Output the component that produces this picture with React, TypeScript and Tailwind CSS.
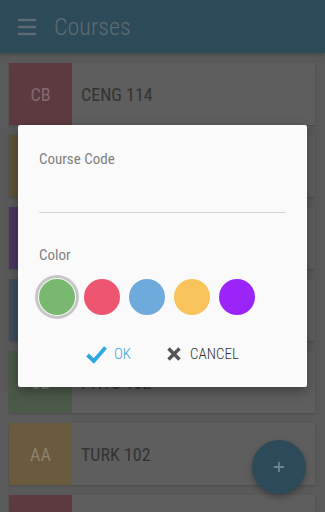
import { Menu } from 'lucide-react'

type Course = {
  code: string
  initials: string
  color: string
}

// rows 2-4 sit fully under the dialog, row 7 below the fold
const courses: Course[] = [
  { code: 'CENG 114', initials: 'CB', color: 'bg-[#5d3a40]' },
  { code: '', initials: '', color: 'bg-[#5f5238]' },
  { code: '', initials: '', color: 'bg-[#4a3660]' },
  { code: '', initials: '', color: 'bg-[#3e4c5b]' },
  { code: 'PHYS 102', initials: 'CB', color: 'bg-[#4b5a48]' },
  { code: 'TURK 102', initials: 'AA', color: 'bg-[#6a5a3e]' },
  { code: '', initials: '', color: 'bg-[#5d3a40]' },
]

const swatches = ['bg-[#78b96f]', 'bg-[#ee5571]', 'bg-[#6eaadc]', 'bg-[#f8c35a]', 'bg-[#9b25f8]']

const condensed = "font-['Roboto_Condensed','Liberation_Sans_Narrow','Roboto',sans-serif]"

function cn(...parts: string[]) {
  return parts.filter(Boolean).join(' ')
}

function CourseRow({ course }: { course: Course }) {
  return (
    <div className="flex h-[62px] items-center bg-[#5e5e5e] shadow-[0_1px_2px_rgba(0,0,0,0.15)]">
      <div className={cn('flex h-full w-[63px] items-center justify-center', course.color)}>
        {course.initials ? (
          <span className={`${condensed} text-[18px] text-white/25`}>{course.initials}</span>
        ) : null}
      </div>
      {course.code ? (
        <span className={`${condensed} ml-[9px] text-[18px] font-normal text-[#333333]`}>{course.code}</span>
      ) : null}
    </div>
  )
}

function CourseDialog() {
  return (
    <div className="flex h-[262px] w-[289px] flex-col rounded-[2px] bg-[#fafafa] px-[21px] pt-[24px] pb-[14px] shadow-[0_4px_12px_rgba(0,0,0,0.35)]">
      <div className={`${condensed} text-[15px]/5 text-[#808080]`}>Course Code</div>
      <div className="h-[44px] border-b border-[#d6d6d6]" />
      <div className={`${condensed} mt-[32px] text-[15px]/5 text-[#808080]`}>Color</div>
      <div className="mt-[14px] flex gap-[9px]">
        {swatches.map((swatch, i) => (
          <div
            key={swatch}
            className={cn(
              'h-[36px] w-[36px] rounded-full',
              swatch,
              i === 0 ? 'shadow-[0_0_0_1px_#fafafa,0_0_0_4px_#c6c6c6]' : '',
            )}
          />
        ))}
      </div>
      <div className="mt-[21px] flex h-[36px] items-center justify-center gap-[36px]">
        <button type="button" className="flex items-center gap-[7px]">
          <svg width="21" height="19" viewBox="0 0 21 19">
            <path d="M1.5 10 L7.8 16 L19.5 2.5" fill="none" stroke="#2fa7e0" strokeWidth="3.8" />
          </svg>
          <span className={`${condensed} text-[15px] font-light text-[#3aa5dd]`}>OK</span>
        </button>
        <button type="button" className="flex items-center gap-[9px]">
          <svg width="14" height="14" viewBox="0 0 14 14">
            <path d="M1.5 1.5 L12.5 12.5 M12.5 1.5 L1.5 12.5" fill="none" stroke="#555555" strokeWidth="3.4" />
          </svg>
          <span className={`${condensed} text-[15px] font-light text-[#333333]`}>CANCEL</span>
        </button>
      </div>
    </div>
  )
}

export default function App() {
  return (
    <div className="relative h-[512px] w-[325px] overflow-hidden bg-[#595959]">
      <header className="flex h-[53px] items-center bg-[#2c4a58] shadow-[0_2px_3px_rgba(0,0,0,0.2)]">
        <Menu className="ml-[15px] h-[24px] w-[24px] text-[#5d6a70]" strokeWidth={2.6} />
        <span className={`${condensed} ml-[15px] text-[24px] font-light text-[#5f6c72]`}>Courses</span>
      </header>
      <div className="flex flex-col gap-[10px] pt-[10px] pr-[10px] pl-[9px]">
        {courses.map((course, i) => (
          <CourseRow key={i} course={course} />
        ))}
      </div>
      <button
        type="button"
        className="absolute top-[440px] left-[252px] flex h-[54px] w-[54px] items-center justify-center rounded-full bg-[#2c4a58] shadow-[0_3px_6px_rgba(0,0,0,0.3)]"
      >
        <svg width="12" height="12" viewBox="0 0 12 12">
          <path d="M6 1 V11 M1 6 H11" stroke="#6a8590" strokeWidth="1.8" />
        </svg>
      </button>
      <div className="absolute inset-0 flex items-center justify-center">
        <CourseDialog />
      </div>
    </div>
  )
}
